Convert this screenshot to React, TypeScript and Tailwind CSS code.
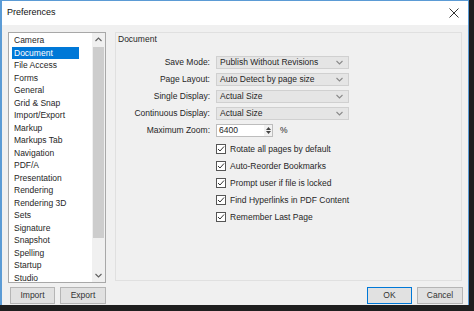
import { useState } from 'react'

const pages = [
  'Camera',
  'Document',
  'File Access',
  'Forms',
  'General',
  'Grid & Snap',
  'Import/Export',
  'Markup',
  'Markups Tab',
  'Navigation',
  'PDF/A',
  'Presentation',
  'Rendering',
  'Rendering 3D',
  'Sets',
  'Signature',
  'Snapshot',
  'Spelling',
  'Startup',
  'Studio',
]

const selects = [
  { label: 'Save Mode:', value: 'Publish Without Revisions' },
  { label: 'Page Layout:', value: 'Auto Detect by page size' },
  { label: 'Single Display:', value: 'Actual Size' },
  { label: 'Continuous Display:', value: 'Actual Size' },
]

const checks = [
  'Rotate all pages by default',
  'Auto-Reorder Bookmarks',
  'Prompt user if file is locked',
  'Find Hyperlinks in PDF Content',
  'Remember Last Page',
]

function Chevron({ up = false, color = '#606060' }: { up?: boolean; color?: string }) {
  return (
    <svg width="7" height="5" viewBox="0 0 7 5" className={up ? 'rotate-180' : ''}>
      <path d="M0.5 1 L3.5 4 L6.5 1" fill="none" stroke={color} strokeWidth="1.1" />
    </svg>
  )
}

function Button({ label, primary = false, w }: { label: string; primary?: boolean; w: string }) {
  return (
    <button
      type="button"
      className={`${w} h-[17px] flex items-center justify-center bg-[#e1e1e1] border text-[8.5px] text-[#333] ${
        primary ? 'border-[#0078d7]' : 'border-[#b5b5b5]'
      }`}
    >
      {label}
    </button>
  )
}

export default function App() {
  const [selected, setSelected] = useState('Document')
  const [checked, setChecked] = useState<boolean[]>(checks.map(() => true))

  return (
    <div
      className="w-[474px] h-[311px] bg-[#1f1f1f] overflow-hidden text-[#262626]"
      style={{ fontFamily: '"Liberation Sans", Arial, sans-serif' }}
    >
      <div className="w-[469px] h-[305px] bg-[#f0f0f0] border-l-2 border-t border-r border-[#5b9bd5] flex flex-col">
        {/* title bar */}
        <div className="h-[24px] bg-white flex items-center justify-between pl-[5px] pr-[9px] shrink-0">
          <span className="text-[9px] text-[#111]">Preferences</span>
          <svg width="10" height="10" viewBox="0 0 10 10">
            <path d="M0.5 0.5 L9.5 9.5 M9.5 0.5 L0.5 9.5" stroke="#333" strokeWidth="1" />
          </svg>
        </div>

        <div className="flex pt-[7px] pl-[6px] gap-[9px] items-start">
          {/* page list */}
          <div className="w-[98px] h-[251px] bg-white border border-[#a8a8a8] flex">
            <div className="flex-1 flex flex-col pt-[1px] pl-[3px] overflow-hidden">
              {pages.map((p) => (
                <div
                  key={p}
                  onClick={() => setSelected(p)}
                  className={`w-[67px] h-[12.5px] leading-[12.5px] px-[2px] text-[8.5px] whitespace-nowrap cursor-default ${
                    selected === p ? 'bg-[#0078d7] text-white' : 'text-[#262626]'
                  }`}
                >
                  {p}
                </div>
              ))}
            </div>
            <div className="w-[13px] bg-[#f0f0f0] flex flex-col">
              <div className="h-[13px] flex items-center justify-center">
                <Chevron up />
              </div>
              <div className="flex-1 px-[1px] pt-[1px]">
                <div className="h-[191px] bg-[#cdcdcd]" />
              </div>
              <div className="h-[13px] flex items-center justify-center">
                <Chevron />
              </div>
            </div>
          </div>

          {/* settings panel */}
          <div className="w-[347px] h-[249px] border border-[#e0e0e0] flex flex-col">
            <div className="pl-[2px] h-[12.5px] leading-[12.5px] text-[8.5px]">Document</div>
            <div className="mt-[10.5px] flex flex-col gap-[4px]">
              {selects.map((s) => (
                <div key={s.label} className="flex items-center h-[13px] gap-[6px]">
                  <span className="w-[94px] text-right text-[8.5px] whitespace-nowrap">{s.label}</span>
                  <div className="w-[133px] h-[13px] bg-[#e5e5e5] border border-[#d0d0d0] flex items-center justify-between pl-[3px] pr-[5px]">
                    <span className="text-[8.5px] whitespace-nowrap">{s.value}</span>
                    <Chevron color="#8a8a8a" />
                  </div>
                </div>
              ))}
              <div className="flex items-center h-[13px] gap-[6px]">
                <span className="w-[94px] text-right text-[8.5px] whitespace-nowrap">Maximum Zoom:</span>
                <div className="w-[57px] h-[13px] bg-white border border-[#bdbdbd] flex items-center justify-between pl-[2px]">
                  <span className="text-[8.5px]">6400</span>
                  <div className="w-[8px] h-full flex flex-col items-center justify-center gap-[1px] bg-[#f2f2f2]">
                    <svg width="5" height="3" viewBox="0 0 5 3">
                      <path d="M0 3 L2.5 0 L5 3 Z" fill="#444" />
                    </svg>
                    <svg width="5" height="3" viewBox="0 0 5 3">
                      <path d="M0 0 L2.5 3 L5 0 Z" fill="#444" />
                    </svg>
                  </div>
                </div>
                <span className="ml-[1px] text-[8.5px]">%</span>
              </div>
            </div>
            <div className="mt-[3.5px] flex flex-col">
              {checks.map((c, i) => (
                <label key={c} className="h-[17px] flex items-center pl-[100px] gap-[4px] cursor-default">
                  <span
                    onClick={() => setChecked((v) => v.map((x, j) => (j === i ? !x : x)))}
                    className="w-[10px] h-[10px] bg-white border border-[#555] flex items-center justify-center"
                  >
                    {checked[i] && (
                      <svg width="8" height="8" viewBox="0 0 8 8">
                        <path d="M1 4 L3 6 L7 1.5" fill="none" stroke="#333" strokeWidth="1" />
                      </svg>
                    )}
                  </span>
                  <span className="text-[8.5px] whitespace-nowrap">{c}</span>
                </label>
              ))}
            </div>
          </div>
        </div>

        {/* button row */}
        <div className="mt-[3.5px] flex items-center pl-[8px] pr-[5px] gap-[5px]">
          <Button label="Import" w="w-[45px]" />
          <Button label="Export" w="w-[46px]" />
          <div className="flex-1" />
          <Button label="OK" primary w="w-[45px]" />
          <Button label="Cancel" w="w-[46px]" />
        </div>
      </div>
    </div>
  )
}
